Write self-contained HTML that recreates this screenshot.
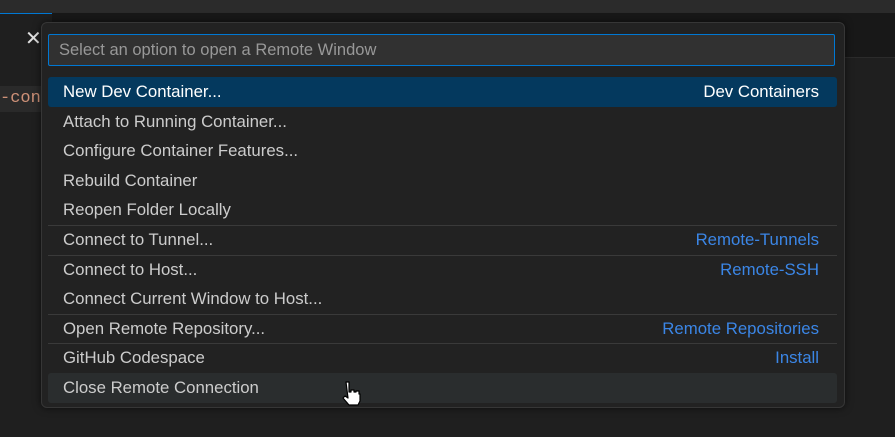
<!DOCTYPE html>
<html><head><style>
*{margin:0;padding:0;box-sizing:border-box}
body{width:895px;height:437px;background:#1f1f1f;position:relative;overflow:hidden;font-family:"Liberation Sans",sans-serif}
.top{position:absolute;left:0;top:0;width:895px;height:13px;background:#2b2b2b}
.tabs{position:absolute;left:0;top:13px;width:895px;height:45px;background:#181818;border-bottom:1px solid #2b2b2b}
.tab{position:absolute;left:0;top:13px;width:52px;height:46px;background:#1f1f1f;border-top:1px solid #0078d4}
.x{position:absolute;left:25px;top:26px;color:#e0e0e0;font-size:20px}
.code{position:absolute;left:0;top:86px;width:45px;height:26px;background:#2a2a2a;color:#ce9178;font-family:"Liberation Mono",monospace;font-size:17px;line-height:26px}
.panel{position:absolute;left:41px;top:22px;width:804px;height:386px;background:#222222;border:1px solid #363636;border-radius:6px;box-shadow:0 0 8px rgba(0,0,0,.6)}
.inp{position:absolute;left:48px;top:34px;width:787px;height:32px;background:#313131;border:1px solid #0078d4;border-radius:2px;color:#989898;font-size:16.5px;line-height:30px;padding-left:10px}
.row{position:absolute;left:48px;width:789px;height:29.6px;color:#cccccc;font-size:16.8px;line-height:29.6px;padding-left:15px;padding-right:18px;border-radius:3px}
.row span{float:right;color:#3b86e6}
.sel{background:#04395e;color:#ffffff}
.sel span{color:#ffffff}
.hov{background:#2a2d2e}
.sep{position:absolute;left:48px;width:789px;height:1px;background:#3a3a3a}
</style></head><body>
<div class="top"></div><div class="tabs"></div><div class="tab"></div>
<div class="x">✕</div>
<div class="code">-con</div>
<div class="panel"></div>
<div class="inp">Select an option to open a Remote Window</div>
<div class="row sel" style="top:77px">New Dev Container...<span>Dev Containers</span></div>
<div class="row" style="top:106.6px">Attach to Running Container...</div>
<div class="row" style="top:136.2px">Configure Container Features...</div>
<div class="row" style="top:165.8px">Rebuild Container</div>
<div class="row" style="top:195.4px">Reopen Folder Locally</div>
<div class="sep" style="top:225px"></div>
<div class="row" style="top:225px">Connect to Tunnel...<span>Remote-Tunnels</span></div>
<div class="sep" style="top:254.6px"></div>
<div class="row" style="top:254.6px">Connect to Host...<span>Remote-SSH</span></div>
<div class="row" style="top:284.2px">Connect Current Window to Host...</div>
<div class="sep" style="top:313.8px"></div>
<div class="row" style="top:313.8px">Open Remote Repository...<span>Remote Repositories</span></div>
<div class="sep" style="top:343.4px"></div>
<div class="row" style="top:343.4px">GitHub Codespace<span>Install</span></div>
<div class="row hov" style="top:373px">Close Remote Connection</div>
<svg style="position:absolute;left:340px;top:380px" width="26" height="28" viewBox="0 0 26 28"><path d="M6 2 h3 v10 h2 v-2 h3 v2 h2 v-1 h3 v3 h1 v7 l-2 4 h-9 l-6 -7 l2 -2 l3 2 z" fill="#fff" stroke="#000" stroke-width="1.2" stroke-linejoin="round"/></svg>
</body></html>
